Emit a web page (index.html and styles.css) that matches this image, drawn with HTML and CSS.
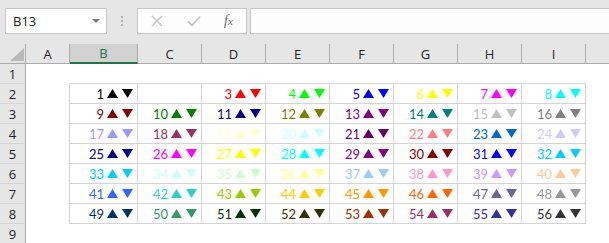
FILE: index.html
```html
<!DOCTYPE html>
<html lang="en">
<head>
    <meta charset="UTF-8">
    <title>Color Index</title>
    <link rel="stylesheet" href="styles.css">
</head>
<body>
    <div class="formula-bar">
        <div class="name-box"><span>B13</span><span class="caret"></span></div>
        <div class="grip"><i></i><i></i><i></i></div>
        <div class="fx-box">
            <svg class="cancel" width="12" height="12" viewBox="0 0 12 12"><path d="M1 1L11 11M11 1L1 11" stroke="#c4c4c4" stroke-width="1.4" fill="none"/></svg>
            <svg class="enter" width="14" height="12" viewBox="0 0 14 12"><path d="M1 6.5L5 10.5L13 1.5" stroke="#c4c4c4" stroke-width="1.8" fill="none"/></svg>
            <span class="fx">f<small>x</small></span>
        </div>
        <div class="formula-input"></div>
    </div>

    <div class="sheet">
        <div class="corner"><div class="corner-tri"></div></div>
        <div class="ch">A</div>
        <div class="ch sel">B</div>
        <div class="ch">C</div>
        <div class="ch">D</div>
        <div class="ch">E</div>
        <div class="ch">F</div>
        <div class="ch">G</div>
        <div class="ch">H</div>
        <div class="ch">I</div>
        <div class="ch last"></div>

        <div class="rh">1</div>
        <div class="cell"></div>
        <div class="cell tt"></div><div class="cell tt"></div><div class="cell tt"></div><div class="cell tt"></div>
        <div class="cell tt"></div><div class="cell tt"></div><div class="cell tt"></div><div class="cell tt"></div>
        <div class="cell"></div>

        <div class="rh">2</div>
        <div class="cell tl"></div>
        <div class="cell t c1"><span>1</span><i class="up"></i><i class="down"></i></div>
        <div class="cell t c2"><span>2</span><i class="up"></i><i class="down"></i></div>
        <div class="cell t c3"><span>3</span><i class="up"></i><i class="down"></i></div>
        <div class="cell t c4"><span>4</span><i class="up"></i><i class="down"></i></div>
        <div class="cell t c5"><span>5</span><i class="up"></i><i class="down"></i></div>
        <div class="cell t c6"><span>6</span><i class="up"></i><i class="down"></i></div>
        <div class="cell t c7"><span>7</span><i class="up"></i><i class="down"></i></div>
        <div class="cell t c8"><span>8</span><i class="up"></i><i class="down"></i></div>
        <div class="cell"></div>

        <div class="rh">3</div>
        <div class="cell tl"></div>
        <div class="cell t c9"><span>9</span><i class="up"></i><i class="down"></i></div>
        <div class="cell t c10"><span>10</span><i class="up"></i><i class="down"></i></div>
        <div class="cell t c11"><span>11</span><i class="up"></i><i class="down"></i></div>
        <div class="cell t c12"><span>12</span><i class="up"></i><i class="down"></i></div>
        <div class="cell t c13"><span>13</span><i class="up"></i><i class="down"></i></div>
        <div class="cell t c14"><span>14</span><i class="up"></i><i class="down"></i></div>
        <div class="cell t c15"><span>15</span><i class="up"></i><i class="down"></i></div>
        <div class="cell t c16"><span>16</span><i class="up"></i><i class="down"></i></div>
        <div class="cell"></div>

        <div class="rh">4</div>
        <div class="cell tl"></div>
        <div class="cell t c17"><span>17</span><i class="up"></i><i class="down"></i></div>
        <div class="cell t c18"><span>18</span><i class="up"></i><i class="down"></i></div>
        <div class="cell t c19"><span>19</span><i class="up"></i><i class="down"></i></div>
        <div class="cell t c20"><span>20</span><i class="up"></i><i class="down"></i></div>
        <div class="cell t c21"><span>21</span><i class="up"></i><i class="down"></i></div>
        <div class="cell t c22"><span>22</span><i class="up"></i><i class="down"></i></div>
        <div class="cell t c23"><span>23</span><i class="up"></i><i class="down"></i></div>
        <div class="cell t c24"><span>24</span><i class="up"></i><i class="down"></i></div>
        <div class="cell"></div>

        <div class="rh">5</div>
        <div class="cell tl"></div>
        <div class="cell t c25"><span>25</span><i class="up"></i><i class="down"></i></div>
        <div class="cell t c26"><span>26</span><i class="up"></i><i class="down"></i></div>
        <div class="cell t c27"><span>27</span><i class="up"></i><i class="down"></i></div>
        <div class="cell t c28"><span>28</span><i class="up"></i><i class="down"></i></div>
        <div class="cell t c29"><span>29</span><i class="up"></i><i class="down"></i></div>
        <div class="cell t c30"><span>30</span><i class="up"></i><i class="down"></i></div>
        <div class="cell t c31"><span>31</span><i class="up"></i><i class="down"></i></div>
        <div class="cell t c32"><span>32</span><i class="up"></i><i class="down"></i></div>
        <div class="cell"></div>

        <div class="rh">6</div>
        <div class="cell tl"></div>
        <div class="cell t c33"><span>33</span><i class="up"></i><i class="down"></i></div>
        <div class="cell t c34"><span>34</span><i class="up"></i><i class="down"></i></div>
        <div class="cell t c35"><span>35</span><i class="up"></i><i class="down"></i></div>
        <div class="cell t c36"><span>36</span><i class="up"></i><i class="down"></i></div>
        <div class="cell t c37"><span>37</span><i class="up"></i><i class="down"></i></div>
        <div class="cell t c38"><span>38</span><i class="up"></i><i class="down"></i></div>
        <div class="cell t c39"><span>39</span><i class="up"></i><i class="down"></i></div>
        <div class="cell t c40"><span>40</span><i class="up"></i><i class="down"></i></div>
        <div class="cell"></div>

        <div class="rh">7</div>
        <div class="cell tl"></div>
        <div class="cell t c41"><span>41</span><i class="up"></i><i class="down"></i></div>
        <div class="cell t c42"><span>42</span><i class="up"></i><i class="down"></i></div>
        <div class="cell t c43"><span>43</span><i class="up"></i><i class="down"></i></div>
        <div class="cell t c44"><span>44</span><i class="up"></i><i class="down"></i></div>
        <div class="cell t c45"><span>45</span><i class="up"></i><i class="down"></i></div>
        <div class="cell t c46"><span>46</span><i class="up"></i><i class="down"></i></div>
        <div class="cell t c47"><span>47</span><i class="up"></i><i class="down"></i></div>
        <div class="cell t c48"><span>48</span><i class="up"></i><i class="down"></i></div>
        <div class="cell"></div>

        <div class="rh">8</div>
        <div class="cell tl"></div>
        <div class="cell t c49"><span>49</span><i class="up"></i><i class="down"></i></div>
        <div class="cell t c50"><span>50</span><i class="up"></i><i class="down"></i></div>
        <div class="cell t c51"><span>51</span><i class="up"></i><i class="down"></i></div>
        <div class="cell t c52"><span>52</span><i class="up"></i><i class="down"></i></div>
        <div class="cell t c53"><span>53</span><i class="up"></i><i class="down"></i></div>
        <div class="cell t c54"><span>54</span><i class="up"></i><i class="down"></i></div>
        <div class="cell t c55"><span>55</span><i class="up"></i><i class="down"></i></div>
        <div class="cell t c56"><span>56</span><i class="up"></i><i class="down"></i></div>
        <div class="cell"></div>

        <div class="rh">9</div>
        <div class="cell"></div><div class="cell"></div><div class="cell"></div><div class="cell"></div><div class="cell"></div>
        <div class="cell"></div><div class="cell"></div><div class="cell"></div><div class="cell"></div><div class="cell"></div>
    </div>
</body>
</html>
```

FILE: styles.css
```css
body {
    margin: 0;
    width: 609px;
    height: 243px;
    overflow: hidden;
    background: #ffffff;
    font-family: Lato, "Liberation Sans", sans-serif;
}

/* formula bar */
.formula-bar {
    height: 44px;
    box-sizing: border-box;
    padding: 8px 0 0 5px;
    background: #e6e6e6;
    display: flex;
    align-items: flex-start;
}
.name-box {
    width: 102px;
    height: 26px;
    box-sizing: border-box;
    border: 1px solid #c6c6c6;
    background: #ffffff;
    display: flex;
    align-items: center;
    justify-content: space-between;
    padding: 0 6px 0 7px;
    font: 13px "Open Sans", "DejaVu Sans", sans-serif;
    color: #222222;
}
.caret {
    width: 0;
    height: 0;
    border-left: 4px solid transparent;
    border-right: 4px solid transparent;
    border-top: 4px solid #777777;
}
.grip {
    width: 30px;
    height: 26px;
    display: flex;
    flex-direction: column;
    align-items: center;
    justify-content: center;
    gap: 2px;
}
.grip i {
    width: 2px;
    height: 2px;
    background: #b0b0b0;
}
.fx-box {
    width: 110px;
    height: 26px;
    box-sizing: border-box;
    border: 1px solid #c6c6c6;
    background: #fdfdfd;
    display: flex;
    align-items: center;
    padding-left: 13px;
}
.enter {
    margin-left: 24px;
}
.fx {
    margin-left: 23px;
    font: italic 14px "Liberation Serif", serif;
    color: #6a6a6a;
}
.fx small {
    font-size: 11px;
}
.formula-input {
    flex: 1;
    height: 26px;
    box-sizing: border-box;
    margin-left: 3px;
    border: 1px solid #c6c6c6;
    border-right: none;
    background: #fdfdfd;
}

/* sheet grid */
.sheet {
    display: grid;
    grid-template-columns: 26px 44px 68px repeat(7, 64px) 1fr;
    grid-auto-rows: 20px;
}
.corner, .ch, .rh {
    box-sizing: border-box;
    background: #e6e6e6;
    font: 13px "Open Sans", "DejaVu Sans", sans-serif;
    color: #222222;
    display: flex;
    align-items: center;
    justify-content: center;
}
.corner {
    border-right: 1px solid #ababab;
    border-bottom: 1px solid #ababab;
    align-items: flex-end;
    justify-content: flex-end;
    padding: 0 1px 2px 0;
}
.corner-tri {
    width: 14px;
    height: 13px;
    background: #b9b9b9;
    clip-path: polygon(100% 0, 100% 100%, 0 100%);
}
.ch {
    border-right: 1px solid #ababab;
    border-bottom: 1px solid #ababab;
}
.ch.last {
    border-right: none;
}
.ch.sel {
    background: #d2d2d2;
    color: #217346;
    border-bottom: 2px solid #217346;
}
.rh {
    border-right: 1px solid #ababab;
    border-bottom: 1px solid #d4d4d4;
}

.cell {
    box-sizing: border-box;
    display: flex;
    justify-content: flex-end;
    align-items: center;
    padding-right: 4px;
    font-size: 13px;
}
.t {
    border-right: 1px solid #d4d4d4;
    border-bottom: 1px solid #d4d4d4;
}
.tl {
    border-right: 1px solid #d4d4d4;
}
.tt {
    border-bottom: 1px solid #d4d4d4;
}
.up, .down {
    display: inline-block;
    width: 11px;
    height: 9px;
    background: currentColor;
}
.up {
    margin-left: 3px;
    clip-path: polygon(50% 0, 100% 100%, 0 100%);
}
.down {
    margin-left: 4px;
    clip-path: polygon(0 0, 100% 0, 50% 100%);
}

/* palette */
.c1 { color: #000000; }
.c2 { color: #ffffff; }
.c3 { color: #ff0000; }
.c4 { color: #00ff00; }
.c5 { color: #0000ff; }
.c6 { color: #ffff00; }
.c7 { color: #ff00ff; }
.c8 { color: #00ffff; }
.c9 { color: #800000; }
.c10 { color: #008000; }
.c11 { color: #000080; }
.c12 { color: #808000; }
.c13 { color: #800080; }
.c14 { color: #008080; }
.c15 { color: #c0c0c0; }
.c16 { color: #808080; }
.c17 { color: #9999ff; }
.c18 { color: #993366; }
.c19 { color: #ffffcc; }
.c20 { color: #ccffff; }
.c21 { color: #660066; }
.c22 { color: #ff8080; }
.c23 { color: #0066cc; }
.c24 { color: #ccccff; }
.c25 { color: #000080; }
.c26 { color: #ff00ff; }
.c27 { color: #ffff00; }
.c28 { color: #00ffff; }
.c29 { color: #800080; }
.c30 { color: #800000; }
.c31 { color: #0000ff; }
.c32 { color: #00ccff; }
.c33 { color: #00ccff; }
.c34 { color: #ccffff; }
.c35 { color: #ccffcc; }
.c36 { color: #ffff99; }
.c37 { color: #99ccff; }
.c38 { color: #ff99cc; }
.c39 { color: #cc99ff; }
.c40 { color: #ffcc99; }
.c41 { color: #3366ff; }
.c42 { color: #33cccc; }
.c43 { color: #99cc00; }
.c44 { color: #ffcc00; }
.c45 { color: #ff9900; }
.c46 { color: #ff6600; }
.c47 { color: #666699; }
.c48 { color: #969696; }
.c49 { color: #003366; }
.c50 { color: #339966; }
.c51 { color: #003300; }
.c52 { color: #333300; }
.c53 { color: #993300; }
.c54 { color: #993366; }
.c55 { color: #333399; }
.c56 { color: #333333; }
```
